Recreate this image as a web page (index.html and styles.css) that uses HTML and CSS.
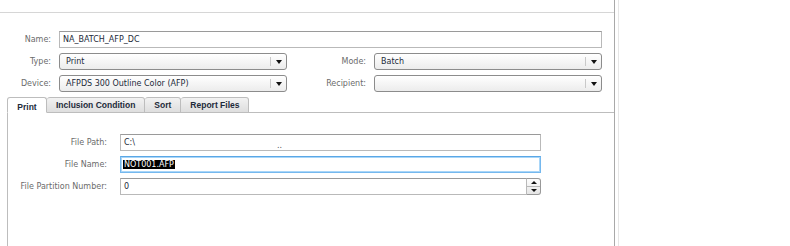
FILE: index.html
```html
<!DOCTYPE html>
<html>
<head>
    <link rel="stylesheet" href="styles.css">
</head>
<body>
    <div class="page">
        <div class="editor">
            <div class="editor-inner">
                <div class="general">
                    <label class="field-label">Name:</label>
                    <div class="text-input wide">NA_BATCH_AFP_DC</div>

                    <label class="field-label">Type:</label>
                    <div class="select"><span>Print</span><i class="arrow"></i></div>
                    <label class="field-label">Mode:</label>
                    <div class="select"><span>Batch</span><i class="arrow"></i></div>

                    <label class="field-label">Device:</label>
                    <div class="select"><span>AFPDS 300 Outline Color (AFP)</span><i class="arrow"></i></div>
                    <label class="field-label">Recipient:</label>
                    <div class="select"><span></span><i class="arrow"></i></div>
                </div>

                <div class="tabs">
                    <div class="tab active">Print</div>
                    <div class="tab">Inclusion Condition</div>
                    <div class="tab">Sort</div>
                    <div class="tab">Report Files</div>
                    <div class="tab-rest"></div>
                </div>

                <div class="tab-panel">
                    <div class="print-form">
                        <label class="field-label">File Path:</label>
                        <div class="text-input"><span>C:\</span><span class="dots">..</span></div>

                        <label class="field-label">File Name:</label>
                        <div class="text-input focused"><span class="selected">NOT001.AFP</span></div>

                        <label class="field-label">File Partition Number:</label>
                        <div class="spinner">
                            <div class="text-input">0</div>
                            <div class="spin-buttons">
                                <i class="up"></i>
                                <i class="down"></i>
                            </div>
                        </div>
                    </div>
                </div>
            </div>
        </div>
        <div class="side"></div>
    </div>
</body>
</html>
```

FILE: styles.css
```css
body {
    margin: 0;
    padding: 0;
    background: #fff;
    font-family: "DejaVu Sans", Verdana, sans-serif;
    font-size: 8px;
    height: 246px;
    overflow: hidden;
}

.page {
    display: flex;
    height: 246px;
}

.editor {
    width: 614px;
    border-right: 1px solid #a9a9a9;
    padding-top: 12px;
}

.editor-inner {
    border-top: 1px solid #d6d6d6;
    height: 233px;
    display: flex;
    flex-direction: column;
}

.side {
    width: 3px;
    border-right: 1px solid #e6e6e6;
    background: #fff;
}

.field-label {
    color: #6b6b6b;
    text-align: right;
    line-height: 17px;
    white-space: nowrap;
}

/* general settings */
.general {
    display: grid;
    grid-template-columns: 51px 228px 71px 228px;
    column-gap: 8px;
    row-gap: 5px;
    padding-top: 18px;
    width: 602px;
}

.general .wide {
    grid-column: 2 / 5;
}

.text-input {
    height: 15px;
    line-height: 15px;
    border: 1px solid #b9b9b9;
    border-top-color: #9a9a9a;
    padding: 0 3px;
    color: #1d2b3a;
    background: #fff;
    white-space: nowrap;
    overflow: hidden;
}

.select {
    height: 15px;
    line-height: 15px;
    border: 1px solid #8c8c8c;
    border-radius: 3px;
    background: linear-gradient(#ffffff, #ececec);
    display: flex;
    color: #1d2b3a;
    padding-left: 6px;
}

.select span {
    flex: 1;
}

.select .arrow {
    width: 15px;
    border-left: 1px solid #c9c9c9;
    margin: 3px 0;
    position: relative;
}

.select .arrow::after {
    content: "";
    position: absolute;
    left: 5px;
    top: 3px;
    border-left: 3px solid transparent;
    border-right: 3px solid transparent;
    border-top: 4px solid #111;
}

/* tabs */
.tabs {
    display: flex;
    margin-top: 5px;
    padding-left: 7px;
    height: 16px;
}

.tab {
    border: 1px solid #bdbdbd;
    border-left: none;
    border-radius: 3px 3px 0 0;
    background: linear-gradient(#f2f2f2, #dedede);
    padding: 0 9px;
    line-height: 15px;
    font-family: "Liberation Sans", Arial, sans-serif;
    font-weight: bold;
    color: #1d2b3a;
    font-size: 8.5px;
}

.tab.active {
    border-left: 1px solid #bdbdbd;
    border-bottom-color: #fff;
    background: #fff;
    width: 38px;
    padding: 2px 0 0 0;
    line-height: 14px;
    text-align: center;
}

.tab-rest {
    flex: 1;
    border-bottom: 1px solid #bdbdbd;
}

.tab-panel {
    flex: 1;
    margin-left: 7px;
    border-left: 1px solid #bdbdbd;
}

.print-form {
    display: grid;
    grid-template-columns: 99px 421px;
    column-gap: 13px;
    row-gap: 5px;
    padding-top: 21px;
}

.dots {
    margin-left: 142px;
    color: #555;
    position: relative;
    top: 3px;
}

.text-input.focused {
    border: 1px solid #75b8ee;
    border-top-color: #5aa7e6;
    box-shadow: inset 0 0 0 1px #a9d6f8;
}

.selected {
    background: #000;
    color: #fff;
    padding: 0 1px;
    margin-left: -1px;
}

.spinner {
    display: flex;
}

.spinner .text-input {
    flex: 1;
}

.spin-buttons {
    width: 13px;
    border: 1px solid #999;
    border-left: none;
    border-radius: 0 3px 3px 0;
    background: linear-gradient(#fdfdfd, #e5e5e5);
    display: flex;
    flex-direction: column;
}

.spin-buttons i {
    flex: 1;
    position: relative;
}

.spin-buttons .up {
    border-bottom: 1px solid #b8b8b8;
}

.spin-buttons .up::after,
.spin-buttons .down::after {
    content: "";
    position: absolute;
    left: 4px;
    border-left: 3px solid transparent;
    border-right: 3px solid transparent;
}

.spin-buttons .up::after {
    top: 2px;
    border-bottom: 3px solid #111;
}

.spin-buttons .down::after {
    top: 2px;
    border-top: 3px solid #111;
}
```
